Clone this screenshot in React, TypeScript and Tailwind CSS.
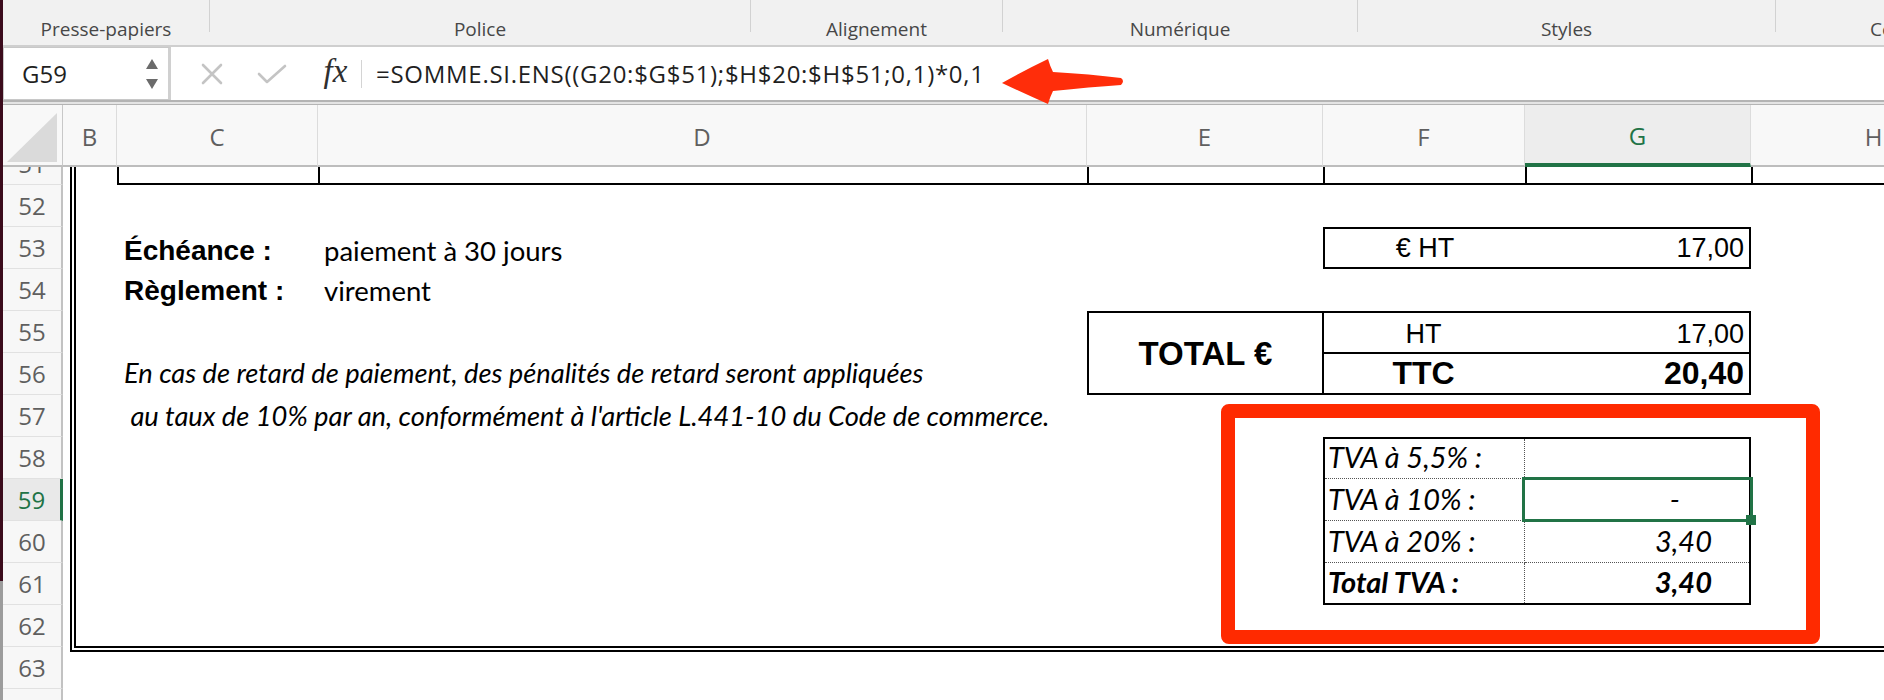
import React from 'react';

const ribbonGroups = [
  { label: 'Presse-papiers', w: 'w-[207px]' },
  { label: 'Police', w: 'w-[541px]' },
  { label: 'Alignement', w: 'w-[252px]' },
  { label: 'Numérique', w: 'w-[355px]' },
  { label: 'Styles', w: 'w-[418px]' },
];

const colHeaders = [
  { id: 'B', w: 'w-[54px]' },
  { id: 'C', w: 'w-[201px]' },
  { id: 'D', w: 'w-[769px]' },
  { id: 'E', w: 'w-[236px]' },
  { id: 'F', w: 'w-[202px]' },
  { id: 'G', w: 'w-[226px]' },
  { id: 'H', w: 'w-[246px]' },
];

// grid row 1 = sheet row 51 (partly hidden under the headers)
const rowHeaders = [
  { n: 52, pos: 'row-start-2' },
  { n: 53, pos: 'row-start-3' },
  { n: 54, pos: 'row-start-4' },
  { n: 55, pos: 'row-start-5' },
  { n: 56, pos: 'row-start-6' },
  { n: 57, pos: 'row-start-7' },
  { n: 58, pos: 'row-start-8' },
  { n: 59, pos: 'row-start-9' },
  { n: 60, pos: 'row-start-10' },
  { n: 61, pos: 'row-start-11' },
  { n: 62, pos: 'row-start-12' },
  { n: 63, pos: 'row-start-13' },
  { n: 64, pos: 'row-start-14' },
];

// row 51: bottom edge of the product table above
const row51Cells = ['col-start-3', 'col-start-4', 'col-start-5', 'col-start-6', 'col-start-7', 'col-start-8'];

const tvaRows = [
  { label: 'TVA à 5,5% :', value: '', bold: false, last: false, pr: 'pr-[37px]' },
  { label: 'TVA à 10% :', value: '-', bold: false, last: false, pr: 'pr-[69px]' },
  { label: 'TVA à 20% :', value: '3,40', bold: false, last: false, pr: 'pr-[37px]' },
  { label: 'Total TVA :', value: '3,40', bold: true, last: true, pr: 'pr-[37px]' },
];

export default function App() {
  return (
    <div className="relative w-[1884px] h-[700px] overflow-hidden bg-white flex font-['Open_Sans',sans-serif]">
      {/* window edge */}
      <div className="w-[3px] shrink-0 flex flex-col">
        <div className="h-[581px] bg-[#3b0b1c]" />
        <div className="flex-1 bg-[#9c9c9c]" />
      </div>

      <div className="flex-1 min-w-0 flex flex-col">
        {/* ribbon group labels */}
        <div className="h-[47px] shrink-0 flex bg-[#f1f1f1] border-b-2 border-[#cfcfcf] overflow-hidden">
          {ribbonGroups.map(g => (
            <div key={g.label} className={`${g.w} shrink-0 flex`}>
              <div className="flex-1 flex items-center justify-center pt-[13px] text-[19px] text-[#474747] whitespace-nowrap">
                {g.label}
              </div>
              <div className="w-px h-[32px] bg-[#d2d2d2]" />
            </div>
          ))}
          <div className="flex-1 min-w-0 overflow-hidden flex items-center pl-[94px] pt-[13px] text-[19px] text-[#474747] whitespace-nowrap">
            Cellules
          </div>
        </div>

        {/* formula bar */}
        <div className="h-[53px] shrink-0 flex bg-white">
          <div className="w-[168px] shrink-0 flex items-center border border-[#c8c8c8] border-r-[3px] border-r-[#d0d0d0] bg-white">
            <span className="pl-[18px] flex-1 text-[24px] text-[#1f1f1f]">G59</span>
            <svg width="14" height="34" viewBox="0 0 14 34" className="mr-[9px]">
              <polygon points="1,12 13,12 7,2" fill="#6b6b6b" />
              <polygon points="1,22 13,22 7,32" fill="#6b6b6b" />
            </svg>
          </div>
          <div className="w-[17px] shrink-0" />
          <div className="w-[48px] shrink-0 flex items-center justify-center">
            <svg width="22" height="22" viewBox="0 0 22 22">
              <path d="M2 2 L20 20 M20 2 L2 20" stroke="#c4c4c4" strokeWidth="2.6" strokeLinecap="round" />
            </svg>
          </div>
          <div className="w-[12px] shrink-0" />
          <div className="w-[48px] shrink-0 flex items-center justify-center">
            <svg width="30" height="20" viewBox="0 0 30 20">
              <path d="M2 10 L10 18 L28 2" stroke="#c4c4c4" strokeWidth="2.6" fill="none" strokeLinecap="round" strokeLinejoin="round" />
            </svg>
          </div>
          <div className="w-[14px] shrink-0" />
          <div className="w-[51px] shrink-0 flex items-center justify-center pb-[4px] font-['Liberation_Serif',serif] italic text-[33px] text-[#2f2f2f]">
            fx
          </div>
          <div className="self-center w-px h-[28px] bg-[#d4d4d4]" />
          <div className="flex items-center pl-[14px] text-[24px] tracking-[0.03em] text-[#1f1f1f] whitespace-nowrap">
            =SOMME.SI.ENS((G20:$G$51);$H$20:$H$51;0,1)*0,1
          </div>
        </div>

        <div className="h-[5px] shrink-0 border-t-2 border-b border-[#b4b4b4] bg-[#e4e4e4]" />

        {/* column headers */}
        <div className="h-[62px] shrink-0 flex bg-[#f8f8f8]">
          <div className="w-[60px] shrink-0 border-r border-[#c8c8c8] border-b-2 border-b-[#bdbdbd]">
            <svg width="58" height="60" viewBox="0 0 58 60">
              <polygon points="4,57 54,57 54,8" fill="#dadada" />
            </svg>
          </div>
          {colHeaders.map(c => (
            <div
              key={c.id}
              className={`${c.w} shrink-0 flex items-center justify-center pt-[3px] text-[24px] border-r border-r-[#dcdcdc] ${c.id === 'G' ? 'bg-[#ededed] text-[#217346] border-b-4 border-b-[#217346]' : 'text-[#5f5f5f] border-b-2 border-b-[#bdbdbd]'}`}
            >
              {c.id}
            </div>
          ))}
        </div>

        {/* sheet */}
        <div className="grid grid-cols-[60px_54px_201px_769px_236px_202px_226px_246px] grid-rows-[18px_repeat(13,42px)]">
          {/* row 51 header, mostly hidden */}
          <div className="col-start-1 row-start-1 overflow-hidden bg-[#f7f7f7] border-b border-[#e1e1e1] border-r-2 border-r-[#c2c2c2]">
            <div className="h-[42px] -mt-[24px] flex items-center justify-center text-[24px] text-[#5f5f5f]">51</div>
          </div>
          {rowHeaders.map(r => (
            <div
              key={r.n}
              className={`col-start-1 ${r.pos} flex items-center justify-center text-[24px] border-b border-[#e1e1e1] ${r.n === 59 ? 'bg-[#e9e9e9] text-[#217346] border-r-[3px] border-r-[#217346]' : 'bg-[#f7f7f7] text-[#5f5f5f] border-r-2 border-r-[#c2c2c2]'}`}
            >
              {r.n}
            </div>
          ))}

          {/* invoice frame */}
          <div className="col-start-2 col-end-9 row-start-1 row-end-13 ml-[7px] mb-[-5px] border-l-[6px] border-b-[6px] border-double border-black" />

          {row51Cells.map(c => (
            <div key={c} className={`${c} row-start-1 border-l-2 border-b-2 border-black`} />
          ))}

          {/* payment terms */}
          <div className="col-start-3 row-start-3 flex items-end pl-[7px] pb-[4px] leading-none whitespace-nowrap font-['Liberation_Sans',Arial,sans-serif] font-bold text-[28px] text-black">
            Échéance :
          </div>
          <div className="col-start-4 row-start-3 flex items-end pl-[6px] pb-[5px] leading-none whitespace-nowrap font-['Lato',sans-serif] text-[27.5px] text-black">
            paiement à 30 jours
          </div>
          <div className="col-start-3 row-start-4 flex items-end pl-[7px] pb-[6px] leading-none whitespace-nowrap font-['Liberation_Sans',Arial,sans-serif] font-bold text-[28px] text-black">
            Règlement :
          </div>
          <div className="col-start-4 row-start-4 flex items-end pl-[6px] pb-[7px] leading-none whitespace-nowrap font-['Lato',sans-serif] text-[27.5px] text-black">
            virement
          </div>

          <div className="col-start-3 row-start-6 flex items-end pl-[7px] pb-[9px] leading-none whitespace-pre font-['Lato',sans-serif] italic text-[27.3px] text-black">
            En cas de retard de paiement, des pénalités de retard seront appliquées
          </div>
          <div className="col-start-3 row-start-7 flex items-end pl-[7px] pb-[8px] leading-none whitespace-pre font-['Lato',sans-serif] italic text-[27.3px] text-black">
            {' au taux de 10% par an, conformément à l\'article L.441-10 du Code de commerce.'}
          </div>

          {/* € HT */}
          <div className="col-start-6 col-end-8 row-start-3 flex border-2 border-black font-['Liberation_Sans',Arial,sans-serif] text-[27px] leading-none text-black">
            <div className="w-[200px] flex items-end justify-center pb-[5px]">€ HT</div>
            <div className="flex-1 flex items-end justify-end pr-[5px] pb-[5px]">17,00</div>
          </div>

          {/* TOTAL € */}
          <div className="col-start-5 col-end-8 row-start-5 row-end-7 flex border-2 border-black font-['Liberation_Sans',Arial,sans-serif] leading-none text-black">
            <div className="w-[235px] flex items-center justify-center border-r-2 border-black font-bold text-[33px]">TOTAL €</div>
            <div className="flex-1 flex flex-col">
              <div className="h-[41px] flex border-b-2 border-black text-[27px]">
                <div className="w-[199px] flex items-end justify-center pb-[4px]">HT</div>
                <div className="flex-1 flex items-end justify-end pr-[5px] pb-[4px]">17,00</div>
              </div>
              <div className="flex-1 flex font-bold text-[32px]">
                <div className="w-[199px] flex items-end justify-center pb-[4px]">TTC</div>
                <div className="flex-1 flex items-end justify-end pr-[5px] pb-[4px]">20,40</div>
              </div>
            </div>
          </div>

          {/* TVA */}
          <div className="col-start-6 col-end-8 row-start-8 row-end-12 grid grid-cols-[200px_1fr] grid-rows-[40px_42px_42px_40px] border-2 border-black font-['Lato',sans-serif] italic text-[29px] leading-none text-black">
            {tvaRows.map(r => (
              <React.Fragment key={r.label}>
                <div className={`flex items-end pl-[3px] pb-[7px] whitespace-nowrap border-r border-dotted border-r-[#555] ${r.last ? '' : 'border-b border-b-[#555]'} ${r.bold ? 'font-bold' : ''}`}>
                  {r.label}
                </div>
                <div className={`flex items-end justify-end pb-[7px] ${r.pr} ${r.last ? '' : 'border-b border-dotted border-b-[#555]'} ${r.bold ? 'font-bold' : ''}`}>
                  {r.value}
                </div>
              </React.Fragment>
            ))}
          </div>

          {/* selected cell G59 */}
          <div className="col-start-7 row-start-9 relative ml-[-3px] mr-[-2px] mt-[-2px] mb-[-1px] border-[3px] border-[#217346]">
            <div className="absolute -right-[6px] -bottom-[6px] w-[10px] h-[10px] bg-[#217346]" />
          </div>
        </div>
      </div>

      {/* annotations */}
      <div className="absolute left-[1221px] top-[404px] w-[599px] h-[240px] border-[14px] border-[#ff2a00] rounded-[8px] pointer-events-none" />
      <svg className="absolute left-[990px] top-[50px] pointer-events-none" width="140" height="60" viewBox="0 0 140 60">
        <path
          d="M12 33 Q35 20 58 9 Q60 16 63 22 Q100 24 131 28 Q135 31 131 35 Q100 37 63 41 Q60 47 58 54 Q35 44 12 33 Z"
          fill="#ff2d0a"
        />
      </svg>
    </div>
  );
}
